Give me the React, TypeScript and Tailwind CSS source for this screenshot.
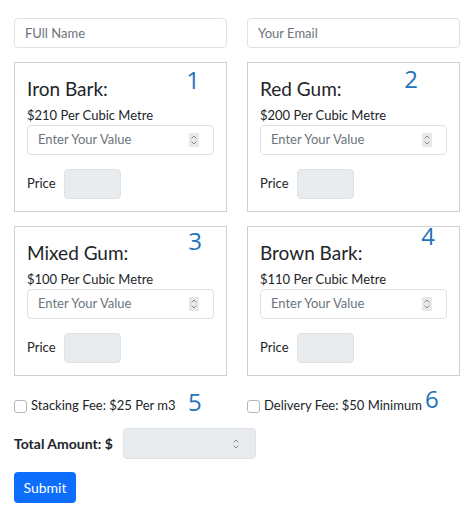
import React from 'react';

const WOODS = [
  { name: 'Iron Bark:', rate: '$210 Per Cubic Metre', num: '1', pos: 'right-[26px] top-[5px]' },
  { name: 'Red Gum:', rate: '$200 Per Cubic Metre', num: '2', pos: 'right-[41px] top-[4px]' },
  { name: 'Mixed Gum:', rate: '$100 Per Cubic Metre', num: '3', pos: 'right-[24px] top-[2px]' },
  { name: 'Brown Bark:', rate: '$110 Per Cubic Metre', num: '4', pos: 'right-[24px] top-[-3px]' },
];

function Spinner({ boxed = true }: { boxed?: boolean }) {
  return (
    <span className={`flex items-center justify-center w-[10px] h-[14px] ${boxed ? 'bg-[#e8e8e8]' : ''}`}>
      <svg width="8" height="12" viewBox="0 0 8 12" fill="none" stroke="#8a8a8a" strokeWidth="1">
        <path d="M1.5 4.5 L4 2 L6.5 4.5" />
        <path d="M1.5 7.5 L4 10 L6.5 7.5" />
      </svg>
    </span>
  );
}

function Annotation({ n, className }: { n: string; className: string }) {
  return (
    <span className={`absolute text-[24px] leading-none text-[#2273b9] font-['Open_Sans',sans-serif] ${className}`}>
      {n}
    </span>
  );
}

function WoodCard({ wood }: { wood: typeof WOODS[0] }) {
  return (
    <div className="relative border border-[#cfcfcf] px-[12px] pt-[14px] pb-[12px]">
      <Annotation n={wood.num} className={wood.pos} />
      <h3 className="text-[19px] leading-[24px] text-[#212529]">{wood.name}</h3>
      <p className="mt-[4px] text-[13px] leading-[20px] text-[#212529]">{wood.rate}</p>
      <div className="flex items-center h-[30px] border border-[#dee2e6] rounded-[4px] pl-[10px] pr-[14px] bg-white">
        <input
          type="text"
          placeholder="Enter Your Value"
          className="flex-1 min-w-0 text-[13px] outline-none placeholder:text-[#6c757d] bg-transparent"
        />
        <Spinner />
      </div>
      <div className="mt-[14px] flex items-center">
        <span className="w-[37px] text-[13px] text-[#212529]">Price</span>
        <div className="w-[57px] h-[30px] bg-[#e9ecef] border border-[#dee2e6] rounded-[4px]" />
      </div>
    </div>
  );
}

export default function App() {
  return (
    <div className="relative bg-white w-[474px] h-[524px] px-[14px] pt-[18px] font-['Lato',sans-serif] text-[#212529]">
      <div className="grid grid-cols-2 gap-x-[20px] gap-y-[14px]">
        <input
          type="text"
          placeholder="FUll Name"
          className="h-[30px] border border-[#dee2e6] rounded-[4px] px-[10px] text-[13px] outline-none placeholder:text-[#6c757d]"
        />
        <input
          type="text"
          placeholder="Your Email"
          className="h-[30px] border border-[#dee2e6] rounded-[4px] px-[10px] text-[13px] outline-none placeholder:text-[#6c757d]"
        />
        {WOODS.map((w) => (
          <WoodCard key={w.name} wood={w} />
        ))}
      </div>

      {/* Fees */}
      <div className="mt-[20px] grid grid-cols-2 gap-x-[20px]">
        <label className="relative flex items-center h-[20px] gap-[4px] text-[13px]">
          <input type="checkbox" className="appearance-none w-[13px] h-[13px] border border-[#b5b5b5] rounded-[3px] bg-white" />
          Stacking Fee: $25 Per m3
          <Annotation n="5" className="left-[174px] top-[-6px]" />
        </label>
        <label className="relative flex items-center h-[20px] gap-[4px] text-[13px]">
          <input type="checkbox" className="appearance-none w-[13px] h-[13px] border border-[#b5b5b5] rounded-[3px] bg-white" />
          Delivery Fee: $50 Minimum
          <Annotation n="6" className="left-[178px] top-[-9px]" />
        </label>
      </div>

      {/* Total */}
      <div className="mt-[12px] flex items-center">
        <span className="w-[109px] text-[14px] font-bold">Total Amount: $</span>
        <div className="flex items-center justify-end w-[133px] h-[31px] bg-[#e9ecef] border border-[#dee2e6] rounded-[4px] pr-[14px]">
          <Spinner boxed={false} />
        </div>
      </div>

      <button className="mt-[13px] w-[62px] h-[31px] bg-[#0d6efd] text-white text-[14px] rounded-[4px]">
        Submit
      </button>
    </div>
  );
}
